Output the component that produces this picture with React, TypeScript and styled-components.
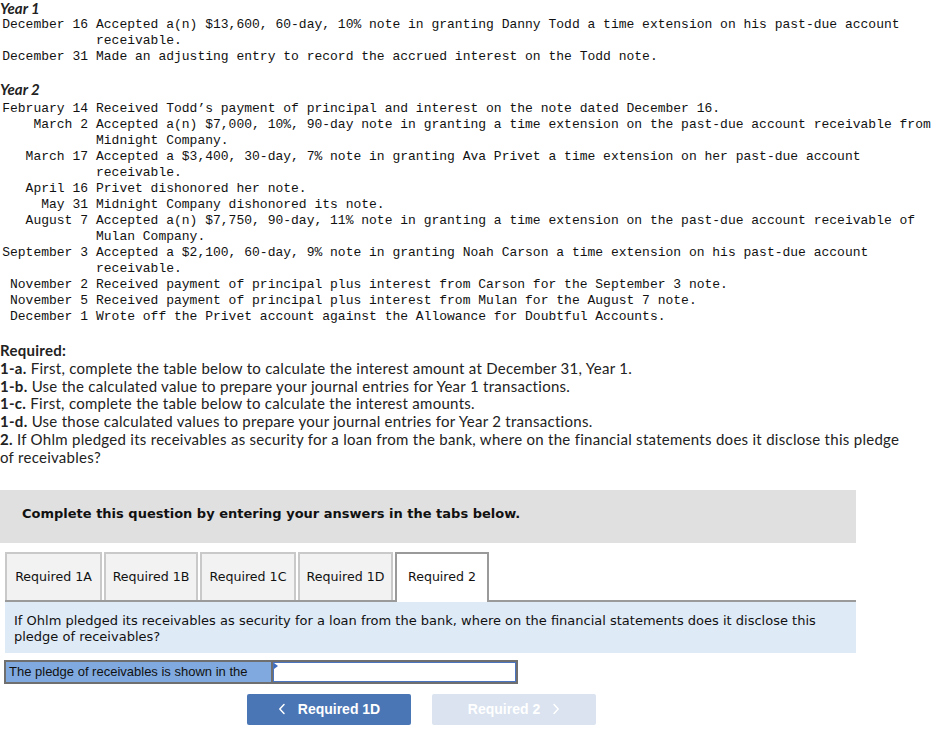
import React from "react";
import styled, { createGlobalStyle } from "styled-components";

const GlobalStyle = createGlobalStyle`
  html, body {
    margin: 0;
    padding: 0;
    background: #fff;
  }
  body {
    font-family: "Lato", "Liberation Sans", sans-serif;
    color: #222;
  }
`;

interface Entry {
  date: string;
  text: string;
}

const year1: Entry[] = [
  {
    date: "December 16",
    text: "Accepted a(n) $13,600, 60-day, 10% note in granting Danny Todd a time extension on his past-due account receivable.",
  },
  {
    date: "December 31",
    text: "Made an adjusting entry to record the accrued interest on the Todd note.",
  },
];

const year2: Entry[] = [
  {
    date: "February 14",
    text: "Received Todd\u2019s payment of principal and interest on the note dated December 16.",
  },
  {
    date: "March 2",
    text: "Accepted a(n) $7,000, 10%, 90-day note in granting a time extension on the past-due account receivable from Midnight Company.",
  },
  {
    date: "March 17",
    text: "Accepted a $3,400, 30-day, 7% note in granting Ava Privet a time extension on her past-due account receivable.",
  },
  { date: "April 16", text: "Privet dishonored her note." },
  { date: "May 31", text: "Midnight Company dishonored its note." },
  {
    date: "August 7",
    text: "Accepted a(n) $7,750, 90-day, 11% note in granting a time extension on the past-due account receivable of Mulan Company.",
  },
  {
    date: "September 3",
    text: "Accepted a $2,100, 60-day, 9% note in granting Noah Carson a time extension on his past-due account receivable.",
  },
  {
    date: "November 2",
    text: "Received payment of principal plus interest from Carson for the September 3 note.",
  },
  {
    date: "November 5",
    text: "Received payment of principal plus interest from Mulan for the August 7 note.",
  },
  {
    date: "December 1",
    text: "Wrote off the Privet account against the Allowance for Doubtful Accounts.",
  },
];

const required = [
  { tag: "1-a.", text: "First, complete the table below to calculate the interest amount at December 31, Year 1." },
  { tag: "1-b.", text: "Use the calculated value to prepare your journal entries for Year 1 transactions." },
  { tag: "1-c.", text: "First, complete the table below to calculate the interest amounts." },
  { tag: "1-d.", text: "Use those calculated values to prepare your journal entries for Year 2 transactions." },
  {
    tag: "2.",
    text: "If Ohlm pledged its receivables as security for a loan from the bank, where on the financial statements does it disclose this pledge of receivables?",
  },
];

const tabs = [
  { label: "Required 1A", width: 97 },
  { label: "Required 1B", width: 94 },
  { label: "Required 1C", width: 96 },
  { label: "Required 1D", width: 95 },
  { label: "Required 2", width: 94, active: true },
];

function Chevron({ dir }: { dir: "left" | "right" }) {
  return (
    <svg width="8" height="12" viewBox="0 0 8 12" fill="none">
      <path
        d={dir === "left" ? "M6 1.5 L1.8 6 L6 10.5" : "M2 1.5 L6.2 6 L2 10.5"}
        stroke="currentColor"
        strokeWidth="1.5"
        strokeLinecap="round"
        strokeLinejoin="round"
      />
    </svg>
  );
}

function EntryList({ entries }: { entries: Entry[] }) {
  return (
    <Entries>
      {entries.map((e) => (
        <React.Fragment key={e.date}>
          <DateCell>{e.date}</DateCell>
          <TextCell>{e.text}</TextCell>
        </React.Fragment>
      ))}
    </Entries>
  );
}

export default function App() {
  return (
    <>
      <GlobalStyle />
      <Page>
        <YearTitle>Year 1</YearTitle>
        <EntryList entries={year1} />
        <YearTitle $spaced>Year 2</YearTitle>
        <EntryList entries={year2} />

        <Requirements>
          <strong>Required:</strong>
          {required.map((r) => (
            <div key={r.tag}>
              <strong>{r.tag}</strong> {r.text}
            </div>
          ))}
        </Requirements>

        <Question>
          <Banner>Complete this question by entering your answers in the tabs below.</Banner>
          <TabStrip>
            {tabs.map((t) => (
              <Tab key={t.label} $width={t.width} $active={t.active}>
                {t.label}
              </Tab>
            ))}
          </TabStrip>
          <Prompt>
            If Ohlm pledged its receivables as security for a loan from the bank, where on the financial
            statements does it disclose this pledge of receivables?
          </Prompt>
          <AnswerRow>
            <AnswerLabel>The pledge of receivables is shown in the</AnswerLabel>
            <AnswerInput />
          </AnswerRow>
          <NavRow>
            <NavButton>
              <Chevron dir="left" />
              Required 1D
            </NavButton>
            <NavButton $disabled>
              Required 2
              <Chevron dir="right" />
            </NavButton>
          </NavRow>
        </Question>
      </Page>
    </>
  );
}

const Page = styled.div`
  width: 942px;
  padding-top: 1px;
  padding-bottom: 6px;
`;

const YearTitle = styled.div<{ $spaced?: boolean }>`
  font-family: "Lato", "Liberation Sans", sans-serif;
  font-style: italic;
  font-weight: 700;
  font-size: 15px;
  line-height: 14px;
  color: #222;
  margin-top: ${(p) => (p.$spaced ? "17px" : "0")};
  margin-bottom: ${(p) => (p.$spaced ? "5px" : "2px")};
`;

const Entries = styled.div`
  display: grid;
  grid-template-columns: 88px 1fr;
  column-gap: 8px;
  font-family: "Liberation Mono", "Courier New", monospace;
  font-size: 13px;
  line-height: 16px;
  color: #111;
`;

const DateCell = styled.div`
  text-align: right;
  white-space: nowrap;
`;

const TextCell = styled.div``;

const Requirements = styled.div`
  max-width: 912px;
  margin-top: 17px;
  font-size: 15px;
  line-height: 17.8px;
  letter-spacing: 0.28px;
  color: #222;

  strong {
    font-weight: 700;
  }
`;

const Question = styled.div`
  width: 856px;
  margin-top: 23px;
  font-family: "DejaVu Sans", Verdana, sans-serif;
`;

const Banner = styled.div`
  box-sizing: border-box;
  height: 53px;
  display: flex;
  align-items: center;
  padding: 0 0 5px 22px;
  background: #e0e0e0;
  font-weight: 700;
  font-size: 13px;
  color: #111;
`;

const TabStrip = styled.div`
  display: flex;
  align-items: flex-start;
  gap: 2px;
  margin: 9px 0 0 5px;
  height: 48px;
  border-bottom: 2px solid #9a9a9a;
`;

const Tab = styled.div<{ $width: number; $active?: boolean }>`
  box-sizing: border-box;
  width: ${(p) => p.$width}px;
  height: ${(p) => (p.$active ? "50px" : "48px")};
  display: flex;
  align-items: center;
  justify-content: center;
  border: 2px solid ${(p) => (p.$active ? "#9a9a9a" : "#c9c9c9")};
  border-bottom: 0;
  background: ${(p) => (p.$active ? "#fff" : "#f2f2f2")};
  font-size: 12.6px;
  color: #111;
  white-space: nowrap;
  position: relative;
  z-index: ${(p) => (p.$active ? 1 : 0)};
  padding-bottom: ${(p) => (p.$active ? "2px" : "0")};
`;

const Prompt = styled.div`
  margin-left: 5px;
  padding: 11px 9px 8px;
  background: #dfeaf7;
  font-size: 13px;
  line-height: 16px;
  color: #111;
`;

const AnswerRow = styled.div`
  box-sizing: border-box;
  display: flex;
  width: 514px;
  height: 24px;
  margin: 7px 0 0 4px;
  border: 2px solid #6f6f6f;
  background: #6f6f6f;
  gap: 2px;
`;

const AnswerLabel = styled.div`
  width: 262px;
  background: #80aadf;
  font-family: "Liberation Sans", Arial, sans-serif;
  font-size: 13px;
  line-height: 20px;
  padding-left: 3px;
  color: #111;
`;

const AnswerInput = styled.div`
  flex: 1;
  box-sizing: border-box;
  background: #fff;
  border: 1px solid #4a74c0;
  position: relative;

  &::before {
    content: "";
    position: absolute;
    left: 0;
    top: 0;
    border-left: 4px solid #3d6bc0;
    border-top: 3px solid transparent;
    border-bottom: 3px solid transparent;
  }
`;

const NavRow = styled.div`
  display: flex;
  gap: 21px;
  margin: 10px 0 0 247px;
`;

const NavButton = styled.div<{ $disabled?: boolean }>`
  box-sizing: border-box;
  width: 164px;
  height: 31px;
  display: flex;
  align-items: center;
  justify-content: center;
  gap: 12px;
  background: ${(p) => (p.$disabled ? "#dae3ef" : "#4a76b5")};
  color: #fff;
  font-family: "Liberation Sans", Arial, sans-serif;
  font-weight: 700;
  font-size: 14px;
  border-radius: 2px;
`;
